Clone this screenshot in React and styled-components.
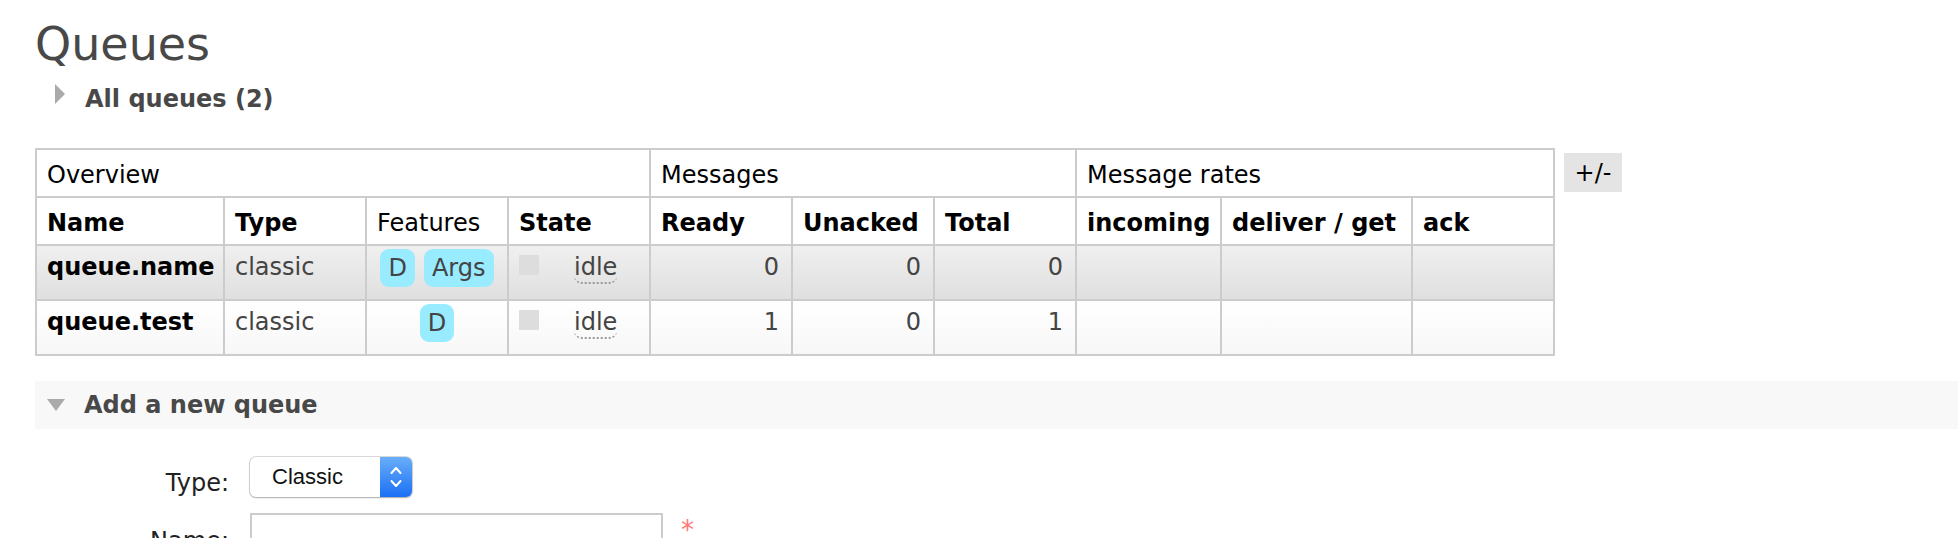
import React from "react";
import styled, { createGlobalStyle } from "styled-components";

const GlobalStyle = createGlobalStyle`
  body {
    margin: 0;
    background: #fff;
    font-family: "DejaVu Sans", Verdana, sans-serif;
    font-size: 24px;
    color: #000;
  }
`;

const queues = [
  { name: "queue.name", type: "classic", features: ["D", "Args"], state: "idle", ready: 0, unacked: 0, total: 0, alt: true },
  { name: "queue.test", type: "classic", features: ["D"], state: "idle", ready: 1, unacked: 0, total: 1, alt: false },
];

const colWidths = [188, 142, 142, 142, 142, 142, 142, 145, 191, 142];

const Page = styled.div`
  padding-left: 35px;
`;

const Title = styled.h1`
  margin: 17px 0 0;
  font-size: 46px;
  font-weight: normal;
  line-height: normal;
  color: #484848;
`;

const SectionTitle = styled.h2`
  display: flex;
  align-items: flex-start;
  gap: 20px;
  margin: 14px 0 0 20px;
  font-size: 24px;
  font-weight: bold;
  line-height: normal;
  color: #484848;
`;

const ArrowRight = styled.span`
  width: 0;
  height: 0;
  margin-top: -1px;
  border-left: 10px solid #aaa;
  border-top: 10px solid transparent;
  border-bottom: 10px solid transparent;
`;

const TableRow = styled.div`
  display: flex;
  align-items: flex-start;
  gap: 9px;
  margin-top: 35px;
`;

const List = styled.table`
  border-collapse: collapse;
  table-layout: fixed;
  width: 1520px;
`;

const Col = styled.col`
  width: ${(p) => p.$w}px;
`;

const HeadRow = styled.tr`
  height: 48px;
  background: #fff;
`;

const Th = styled.th`
  border: 2px solid #ccc;
  padding: 3px 10px 0;
  text-align: left;
  font-weight: ${(p) => (p.$plain ? "normal" : "bold")};
  white-space: nowrap;
`;

const BodyRow = styled.tr`
  height: 55px;
  background: ${(p) =>
    p.$alt ? "linear-gradient(#f0f0f0, #dfdfdf)" : "linear-gradient(#fff, #f7f7f7)"};
`;

const Td = styled.td`
  border: 2px solid #ccc;
  padding: 7px ${(p) => (p.$num ? "12px" : "10px")} 0 10px;
  vertical-align: top;
  text-align: ${(p) => (p.$num ? "right" : "left")};
  font-weight: ${(p) => (p.$bold ? "bold" : "normal")};
  color: ${(p) => (p.$bold ? "#000" : "#444")};
  white-space: nowrap;
`;

const FeatureCell = styled.td`
  border: 2px solid #ccc;
  padding: 3px 4px 0;
  vertical-align: top;
`;

const Pills = styled.div`
  display: flex;
  justify-content: center;
  gap: 9px;
`;

const Pill = styled.span`
  display: inline-block;
  background: #99ebff;
  color: #444;
  border-radius: 9px;
  padding: 5px 8px;
  line-height: 28px;
  font-size: 24px;
`;

const StateBox = styled.div`
  display: flex;
  align-items: flex-start;
  gap: 35px;
`;

const StatusKey = styled.span`
  width: 20px;
  height: 20px;
  margin-top: 2px;
  background: #ddd;
`;

const Abbr = styled.span`
  color: #444;
  padding-bottom: 1px;
  border-bottom: 2px dotted #999;
  border-radius: 0 0 8px 8px;
`;

const ToggleButton = styled.span`
  display: inline-flex;
  align-items: center;
  justify-content: center;
  width: 58px;
  height: 39px;
  margin-top: 5px;
  background: #e4e4e4;
  color: #000;
  font-size: 24px;
`;

const SectionBar = styled.div`
  display: flex;
  align-items: center;
  gap: 19px;
  height: 48px;
  margin-top: 25px;
  padding-left: 12px;
  background: #f8f8f8;
  color: #484848;
  font-weight: bold;
`;

const ArrowDown = styled.span`
  width: 0;
  height: 0;
  border-top: 12px solid #aaa;
  border-left: 9px solid transparent;
  border-right: 9px solid transparent;
`;

const Form = styled.div`
  display: grid;
  grid-template-columns: 194px auto;
  column-gap: 21px;
  row-gap: 16px;
  margin-top: 28px;
  align-items: start;
`;

const Label = styled.label`
  text-align: right;
  color: #222;
  line-height: normal;
  padding-top: ${(p) => p.$pt || 0}px;
`;

const Select = styled.div`
  display: flex;
  width: 162px;
  height: 40px;
  border-radius: 6px;
  overflow: hidden;
  background: #fff;
  box-shadow: 0 0 0 1px rgba(0, 0, 0, 0.14), 0 1px 2px rgba(0, 0, 0, 0.22);
`;

const SelectValue = styled.span`
  flex: 1;
  display: flex;
  align-items: center;
  padding-left: 22px;
  font-family: "Liberation Sans", Arial, sans-serif;
  font-size: 22px;
  color: #111;
`;

const Stepper = styled.span`
  width: 32px;
  display: flex;
  align-items: center;
  justify-content: center;
  background: linear-gradient(#69aef9, #1b6ff4);
`;

const InputRow = styled.div`
  display: flex;
  align-items: flex-start;
  gap: 18px;
`;

const TextInput = styled.div`
  width: 409px;
  height: 40px;
  border: 2px solid #ccc;
  background: #fff;
`;

const Required = styled.span`
  color: #f77;
  font-size: 26px;
  line-height: 1;
  margin-top: 4px;
`;

const Chevrons = () => (
  <svg width="14" height="26" viewBox="0 0 14 26" fill="none" stroke="#fff" strokeWidth="2" strokeLinecap="round" strokeLinejoin="round">
    <path d="M2.5 9 L7 4 L11.5 9" />
    <path d="M2.5 17 L7 22 L11.5 17" />
  </svg>
);

const QueueTable = () => (
  <List>
    <colgroup>
      {colWidths.map((w, i) => (
        <Col key={i} $w={w} />
      ))}
    </colgroup>
    <thead>
      <HeadRow>
        <Th $plain colSpan={4}>Overview</Th>
        <Th $plain colSpan={3}>Messages</Th>
        <Th $plain colSpan={3}>Message rates</Th>
      </HeadRow>
      <HeadRow>
        <Th>Name</Th>
        <Th>Type</Th>
        <Th $plain>Features</Th>
        <Th>State</Th>
        <Th>Ready</Th>
        <Th>Unacked</Th>
        <Th>Total</Th>
        <Th>incoming</Th>
        <Th>deliver / get</Th>
        <Th>ack</Th>
      </HeadRow>
    </thead>
    <tbody>
      {queues.map((q) => (
        <BodyRow key={q.name} $alt={q.alt}>
          <Td $bold>{q.name}</Td>
          <Td>{q.type}</Td>
          <FeatureCell>
            <Pills>
              {q.features.map((f) => (
                <Pill key={f}>{f}</Pill>
              ))}
            </Pills>
          </FeatureCell>
          <Td>
            <StateBox>
              <StatusKey />
              <Abbr>{q.state}</Abbr>
            </StateBox>
          </Td>
          <Td $num>{q.ready}</Td>
          <Td $num>{q.unacked}</Td>
          <Td $num>{q.total}</Td>
          <Td />
          <Td />
          <Td />
        </BodyRow>
      ))}
    </tbody>
  </List>
);

export default function App() {
  return (
    <Page>
      <GlobalStyle />
      <Title>Queues</Title>
      <SectionTitle>
        <ArrowRight />
        All queues (2)
      </SectionTitle>
      <TableRow>
        <QueueTable />
        <ToggleButton>+/-</ToggleButton>
      </TableRow>
      <SectionBar>
        <ArrowDown />
        Add a new queue
      </SectionBar>
      <Form>
        <Label $pt={12}>Type:</Label>
        <Select>
          <SelectValue>Classic</SelectValue>
          <Stepper>
            <Chevrons />
          </Stepper>
        </Select>
        <Label $pt={14}>Name:</Label>
        <InputRow>
          <TextInput />
          <Required>*</Required>
        </InputRow>
      </Form>
    </Page>
  );
}
